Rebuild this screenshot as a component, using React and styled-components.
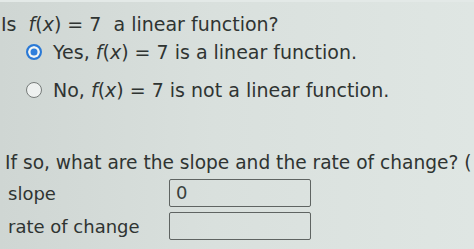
import React from 'react';
import styled, { createGlobalStyle } from 'styled-components';

const GlobalStyle = createGlobalStyle`
  html, body {
    margin: 0;
    padding: 0;
    width: 474px;
    height: 249px;
    overflow: hidden;
    background: #d6ddda;
  }
`;

const Page = styled.div`
  width: 474px;
  height: 249px;
  box-sizing: border-box;
  padding: 10px 0 0 1px;
  background: linear-gradient(90deg, #cfd6d3 0%, #d9e0dd 45%, #dfe6e3 100%);
  border-top: 2px solid #e3e9e7;
  font-family: "DejaVu Sans", Verdana, sans-serif;
  color: #2f3432;
  white-space: nowrap;
  overflow: hidden;
`;

const Question = styled.div`
  font-size: 19px;
  line-height: 24px;
`;

const Fx = styled.span`
  font-style: italic;
  margin-left: ${p => p.gap || 0}px;
`;

const Options = styled.div`
  display: flex;
  flex-direction: column;
  gap: 14px;
  margin: 4px 0 0 25px;
`;

const Option = styled.label`
  display: flex;
  align-items: center;
  gap: 11px;
  font-size: 19px;
  line-height: 24px;
`;

const Radio = styled.span`
  width: 16px;
  height: 16px;
  border-radius: 50%;
  box-sizing: border-box;
  flex: none;
  border: ${p => (p.checked ? '2px solid #2a79d6' : '1.5px solid #767b79')};
  background: ${p => (p.checked ? '#2f7fdc' : '#eef1f0')};
  box-shadow: ${p => (p.checked ? 'inset 0 0 0 2.5px #f2f5f4' : 'none')};
`;

const Prompt = styled.div`
  margin: 49px 0 0 4px;
  font-size: 18.6px;
  line-height: 24px;
`;

const Fields = styled.div`
  display: grid;
  grid-template-columns: 161px 142px;
  row-gap: 5px;
  margin: 4px 0 0 7px;
  font-size: 18px;
`;

const FieldLabel = styled.span`
  display: flex;
  align-items: center;
`;

const Box = styled.div`
  height: 28px;
  box-sizing: border-box;
  border: 1px solid #5f6462;
  border-radius: 2px;
  padding: 2px 6px;
  line-height: 22px;
  font-size: 18px;
  color: #3a3f3d;
`;

export default function App() {
  return (
    <>
      <GlobalStyle />
      <Page>
        <Question>
          Is <Fx gap={6}>f</Fx>(<Fx>x</Fx>) = 7 &nbsp;a linear function?
        </Question>
        <Options>
          <Option>
            <Radio checked />
            <span>Yes, <Fx>f</Fx>(<Fx>x</Fx>) = 7 is a linear function.</span>
          </Option>
          <Option>
            <Radio />
            <span>No, <Fx>f</Fx>(<Fx>x</Fx>) = 7 is not a linear function.</span>
          </Option>
        </Options>
        <Prompt>If so, what are the slope and the rate of change? (</Prompt>
        <Fields>
          <FieldLabel>slope</FieldLabel>
          <Box>0</Box>
          <FieldLabel>rate of change</FieldLabel>
          <Box />
        </Fields>
      </Page>
    </>
  );
}
